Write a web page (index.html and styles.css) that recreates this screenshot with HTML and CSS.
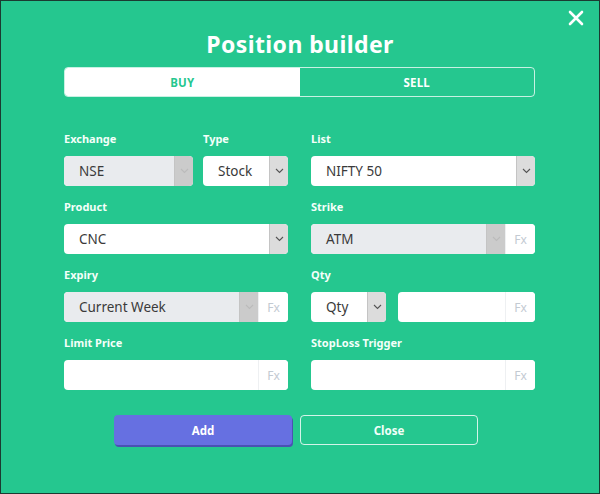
FILE: index.html
```html
<!DOCTYPE html>
<html>
<head>
<meta charset="utf-8">
<link rel="stylesheet" href="styles.css">
</head>
<body>
<div class="modal">
  <button class="close-x" aria-label="Close">
    <svg width="16" height="16" viewBox="0 0 16 16"><path d="M2 2 L14 14 M14 2 L2 14" stroke="#fff" stroke-width="2.6" stroke-linecap="round"/></svg>
  </button>
  <h1 class="title">Position builder</h1>
  <div class="toggle">
    <div class="tab active">BUY</div>
    <div class="tab">SELL</div>
  </div>
  <div class="form">
    <div class="col">
      <div class="split">
        <div class="field w-exch">
          <label>Exchange</label>
          <div class="ctrl disabled"><span class="val">NSE</span><span class="arrow"><svg width="9" height="6" viewBox="0 0 9 6"><path d="M1 1 L4.5 4.5 L8 1" fill="none" stroke="#bbb" stroke-width="1.1"/></svg></span></div>
        </div>
        <div class="field w-type">
          <label>Type</label>
          <div class="ctrl"><span class="val">Stock</span><span class="arrow"><svg width="9" height="6" viewBox="0 0 9 6"><path d="M1 1 L4.5 4.5 L8 1" fill="none" stroke="#555" stroke-width="1.1"/></svg></span></div>
        </div>
      </div>
    </div>
    <div class="field">
      <label>List</label>
      <div class="ctrl"><span class="val">NIFTY 50</span><span class="arrow"><svg width="9" height="6" viewBox="0 0 9 6"><path d="M1 1 L4.5 4.5 L8 1" fill="none" stroke="#555" stroke-width="1.1"/></svg></span></div>
    </div>
    <div class="field">
      <label>Product</label>
      <div class="ctrl"><span class="val">CNC</span><span class="arrow"><svg width="9" height="6" viewBox="0 0 9 6"><path d="M1 1 L4.5 4.5 L8 1" fill="none" stroke="#555" stroke-width="1.1"/></svg></span></div>
    </div>
    <div class="field">
      <label>Strike</label>
      <div class="ctrl disabled"><span class="val">ATM</span><span class="arrow"><svg width="9" height="6" viewBox="0 0 9 6"><path d="M1 1 L4.5 4.5 L8 1" fill="none" stroke="#bbb" stroke-width="1.1"/></svg></span><span class="fx">Fx</span></div>
    </div>
    <div class="field">
      <label>Expiry</label>
      <div class="ctrl disabled"><span class="val">Current Week</span><span class="arrow"><svg width="9" height="6" viewBox="0 0 9 6"><path d="M1 1 L4.5 4.5 L8 1" fill="none" stroke="#bbb" stroke-width="1.1"/></svg></span><span class="fx">Fx</span></div>
    </div>
    <div class="field">
      <label>Qty</label>
      <div class="split qty">
        <div class="ctrl w-qty"><span class="val">Qty</span><span class="arrow"><svg width="9" height="6" viewBox="0 0 9 6"><path d="M1 1 L4.5 4.5 L8 1" fill="none" stroke="#555" stroke-width="1.1"/></svg></span></div>
        <div class="ctrl grow"><span class="val"></span><span class="fx">Fx</span></div>
      </div>
    </div>
    <div class="field">
      <label>Limit Price</label>
      <div class="ctrl"><span class="val"></span><span class="fx">Fx</span></div>
    </div>
    <div class="field">
      <label>StopLoss Trigger</label>
      <div class="ctrl"><span class="val"></span><span class="fx">Fx</span></div>
    </div>
  </div>
  <div class="actions">
    <button class="btn add">Add</button>
    <button class="btn close">Close</button>
  </div>
</div>
</body>
</html>
```
FILE: styles.css
```css
* { box-sizing: border-box; }
html, body { margin: 0; padding: 0; }
body { font-family: "Noto Sans", "Open Sans", sans-serif; }
.modal {
  width: 600px;
  height: 494px;
  background: #25c78f;
  border: 1px solid #1b3b31;
  position: relative;
  padding-top: 29px;
}
.close-x {
  position: absolute;
  top: 9px;
  right: 15px;
  background: none;
  border: 0;
  padding: 0;
  width: 16px;
  height: 16px;
  cursor: pointer;
}
.close-x svg { display: block; }
.title {
  margin: 0;
  text-align: center;
  color: #fff;
  font-size: 23px;
  line-height: 28px;
  font-weight: 700;
  letter-spacing: 0.4px;
}
.toggle {
  margin: 9px 0 0 63px;
  width: 471px;
  height: 30px;
  display: flex;
  border: 1px solid rgba(255,255,255,0.75);
  border-radius: 4px;
  overflow: hidden;
}
.tab {
  flex: 1;
  display: flex;
  align-items: center;
  justify-content: center;
  font-size: 11.5px;
  font-weight: 700;
  color: #fff;
  letter-spacing: 0.2px;
}
.tab.active { background: #fff; color: #25c78f; }
.form {
  margin: 35px 0 0 63px;
  width: 471px;
  display: grid;
  grid-template-columns: 224px 224px;
  column-gap: 23px;
  row-gap: 14px;
}
.field { display: flex; flex-direction: column; }
.field label {
  color: #f4fffa;
  font-size: 11px;
  font-weight: 700;
  line-height: 14px;
  height: 14px;
  margin-bottom: 10px;
}
.split { display: flex; gap: 10px; }
.w-exch { width: 129px; }
.w-type { width: 85px; }
.qty { gap: 12px; }
.w-qty { width: 75px; flex: none; }
.grow { flex: 1; }
.ctrl {
  height: 30px;
  display: flex;
  background: #fff;
  border-radius: 4px;
  overflow: hidden;
  font-size: 13.5px;
  color: #3a3a3a;
}
.ctrl .val {
  flex: 1;
  display: flex;
  align-items: center;
  padding-left: 15px;
  white-space: nowrap;
  overflow: hidden;
}
.ctrl .arrow {
  width: 19px;
  flex: none;
  display: flex;
  align-items: center;
  justify-content: center;
  background: #dcdcdc;
  border-left: 1px solid #c4c4c4;
}
.ctrl.disabled .val { background: #e9ebee; }
.ctrl.disabled .arrow { background: #cbcbcb; border-left-color: #c4c4c4; }
.ctrl .fx {
  width: 30px;
  flex: none;
  display: flex;
  align-items: center;
  justify-content: center;
  background: #fff;
  border-left: 1px solid #eef0f2;
  color: #c3cad2;
  font-size: 12px;
}
.actions {
  margin-top: 25px;
  display: flex;
  gap: 8px;
  padding-left: 113px;
}
.btn {
  width: 178px;
  height: 30px;
  border-radius: 4px;
  font-family: inherit;
  font-size: 11.5px;
  font-weight: 700;
  color: #fff;
  cursor: pointer;
}
.btn.add {
  background: #6670e1;
  border: 0;
  box-shadow: 1px 2px 0 #4a52b2;
}
.btn.close {
  background: transparent;
  border: 1px solid rgba(255,255,255,0.8);
  color: #f2fff9;
}
```
